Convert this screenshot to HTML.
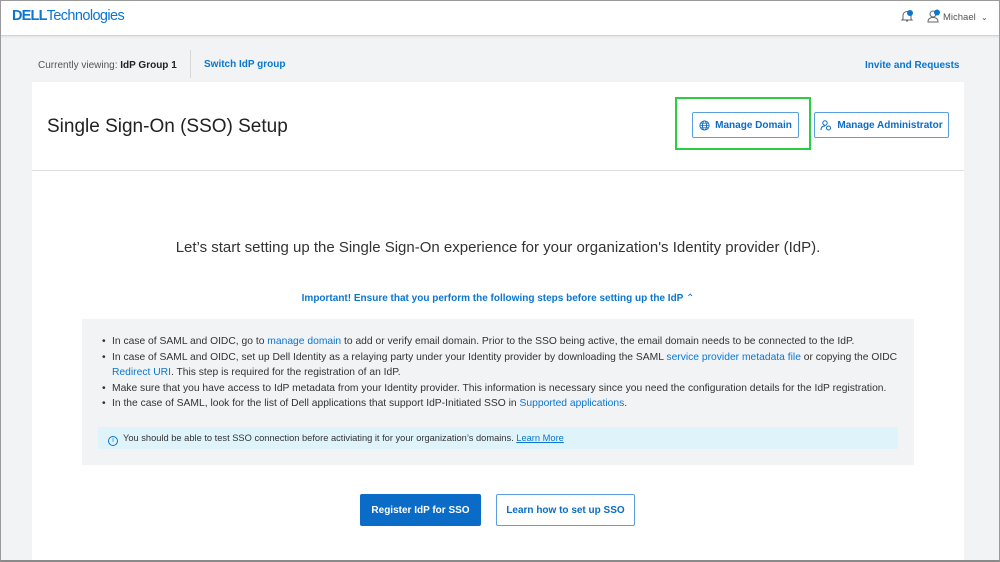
<!DOCTYPE html>
<html><head><meta charset="utf-8"><style>
*{box-sizing:border-box;margin:0;padding:0}
body{width:1000px;height:562px;overflow:hidden;font-family:"Liberation Sans",Arial,sans-serif;background:#f2f3f5;position:relative;color:#333}
.frame{position:absolute;inset:0;border:1px solid #9a9a9a;border-bottom:2px solid #8a8a8a;pointer-events:none;z-index:10}
.hdr{position:absolute;left:0;top:0;width:1000px;height:36px;background:#fff;border-bottom:1px solid #d4d4d4;box-shadow:0 1px 2px rgba(0,0,0,.08)}
.logo{position:absolute;left:12px;top:8px;color:#0a76d0;font-size:14.5px;letter-spacing:-0.6px}
.logo b{font-weight:900;letter-spacing:-0.8px}
.a{color:#0a76d0}
.abs{position:absolute}
.card{position:absolute;left:32px;top:82px;width:932px;height:480px;background:#fff}
.btn{position:absolute;border:1px solid #5aa0e0;border-radius:2px;color:#0a6cc6;font-size:10px;font-weight:bold;display:flex;align-items:center;justify-content:center;gap:5px;background:#fff}
ul{list-style:none}
li{font-size:10.3px;line-height:15.5px;color:#333;padding-left:10px;position:relative}
li:before{content:"•";position:absolute;left:0}
</style></head><body>
<div class="hdr">
<div class="logo"><b>DELL</b>Technologies</div>
<svg class="abs" style="left:900px;top:9px" width="14" height="14" viewBox="0 0 14 14"><path d="M3 10V6.5a4 4 0 0 1 8 0V10l1 1H2z M6 12h2" fill="none" stroke="#666" stroke-width="1"/><circle cx="10" cy="4" r="3" fill="#0a76d0"/></svg>
<svg class="abs" style="left:926px;top:9px" width="16" height="14" viewBox="0 0 16 14"><circle cx="7" cy="5" r="3" fill="none" stroke="#666"/><path d="M2 13c0-3 2-4.5 5-4.5s5 1.5 5 4.5z" fill="none" stroke="#666"/><circle cx="11" cy="3.5" r="3" fill="#0a76d0"/></svg>
<div class="abs" style="left:943px;top:12px;font-size:9.5px;color:#555">Michael&nbsp; <span style="font-size:8px">&#8964;</span></div>
</div>
<div class="abs" style="left:38px;top:60px;font-size:10px;color:#555">Currently viewing: <b style="color:#222">IdP Group 1</b></div>
<div class="abs" style="left:190px;top:50px;width:1px;height:28px;background:#d8d8d8"></div>
<div class="abs a" style="left:204px;top:59px;font-size:10px;font-weight:bold">Switch IdP group</div>
<div class="abs a" style="left:865px;top:60px;font-size:10px;font-weight:bold">Invite and Requests</div>
<div class="card">
<div class="abs" style="left:15px;top:34px;font-size:19px;color:#222">Single Sign-On (SSO) Setup</div>
<div class="abs" style="left:643px;top:15px;width:136px;height:53px;border:2px solid #2ecc40"></div>
<div class="btn" style="left:660px;top:30px;width:107px;height:26px"><svg width="11" height="11" viewBox="0 0 12 12"><circle cx="6" cy="6" r="5" fill="none" stroke="#0a6cc6"/><ellipse cx="6" cy="6" rx="2.2" ry="5" fill="none" stroke="#0a6cc6"/><path d="M1 6h10M2 3.5h8M2 8.5h8" stroke="#0a6cc6" stroke-width=".8"/></svg>Manage Domain</div>
<div class="btn" style="left:782px;top:30px;width:135px;height:26px"><svg width="12" height="11" viewBox="0 0 12 11"><circle cx="5" cy="3" r="2.2" fill="none" stroke="#0a6cc6"/><path d="M1 10c0-2.5 1.5-4 4-4" fill="none" stroke="#0a6cc6"/><circle cx="8.5" cy="8" r="2" fill="none" stroke="#0a6cc6"/></svg>Manage Administrator</div>
<div class="abs" style="left:0;top:88px;width:932px;height:1px;background:#e0e0e0"></div>
<div class="abs" style="left:0;top:157px;width:932px;text-align:center;font-size:15px;color:#333">Let’s start setting up the Single Sign-On experience for your organization's Identity provider (IdP).</div>
<div class="abs a" style="left:0;top:211px;width:932px;text-align:center;font-size:10px;font-weight:bold">Important! Ensure that you perform the following steps before setting up the IdP <span style="font-weight:normal">&#8963;</span></div>
<div class="abs" style="left:50px;top:237px;width:832px;height:146px;background:#f2f3f5">
<ul style="position:absolute;left:20px;top:15px;width:800px">
<li>In case of SAML and OIDC, go to <span class="a">manage domain</span> to add or verify email domain. Prior to the SSO being active, the email domain needs to be connected to the IdP.</li>
<li>In case of SAML and OIDC, set up Dell Identity as a relaying party under your Identity provider by downloading the SAML <span class="a">service provider metadata file</span> or copying the OIDC <span class="a">Redirect URI</span>. This step is required for the registration of an IdP.</li>
<li>Make sure that you have access to IdP metadata from your Identity provider. This information is necessary since you need the configuration details for the IdP registration.</li>
<li>In the case of SAML, look for the list of Dell applications that support IdP-Initiated SSO in <span class="a">Supported applications</span>.</li>
</ul>
<div class="abs" style="left:16px;top:108px;width:800px;height:22px;background:#dff3fb;font-size:9.3px;color:#333;padding:6px 0 0 10px"><span class="a" style="display:inline-block;width:10px;height:10px;border:1px solid #0a76d0;border-radius:50%;font-size:7px;text-align:center;line-height:8px;vertical-align:-1px">i</span>&nbsp; You should be able to test SSO connection before activiating it for your organization’s domains. <span class="a" style="text-decoration:underline">Learn More</span></div>
</div>
<div class="abs" style="left:328px;top:412px;width:121px;height:32px;background:#0a6cc6;color:#fff;font-size:10px;font-weight:bold;display:flex;align-items:center;justify-content:center;border-radius:2px">Register IdP for SSO</div>
<div class="btn" style="left:464px;top:412px;width:139px;height:32px">Learn how to set up SSO</div>
</div>
<div class="frame"></div>
</body></html>
